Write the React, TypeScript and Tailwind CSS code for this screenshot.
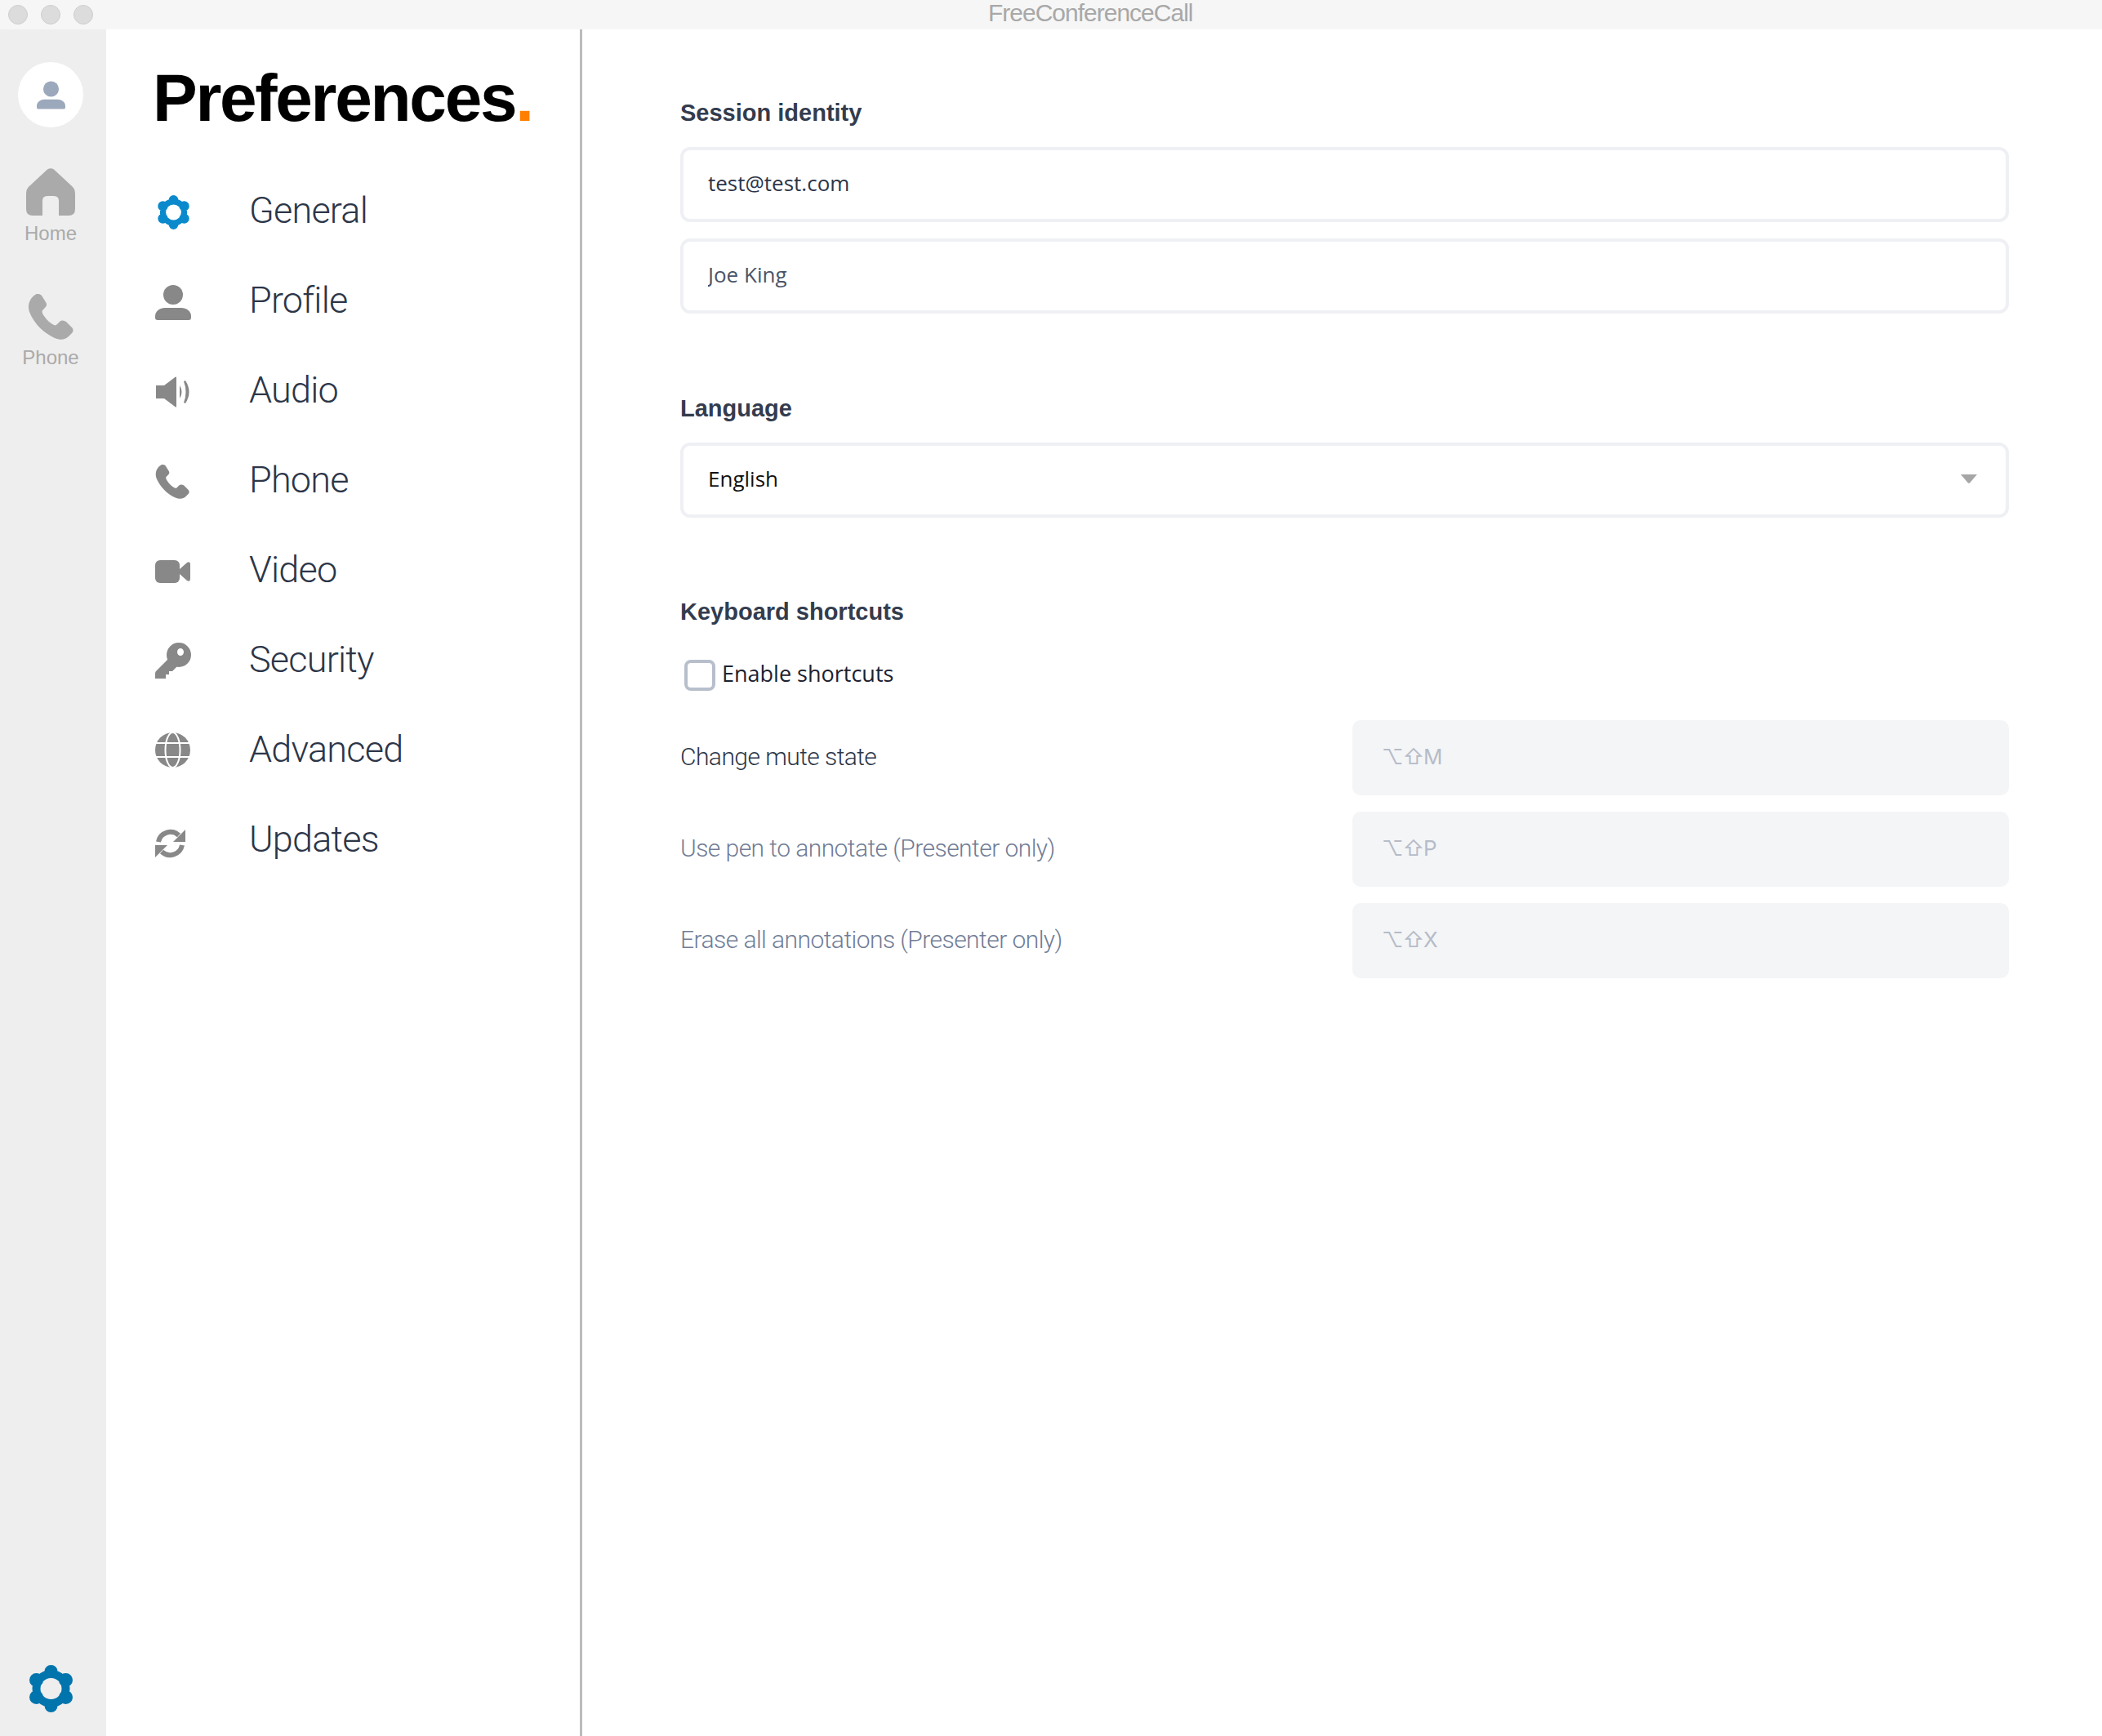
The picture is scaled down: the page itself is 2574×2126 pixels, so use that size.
import React from 'react';

const Gear = ({ className }: { className: string }) => (
  <svg viewBox="0 0 53 58" className={className} fill="currentColor">
    {/* lobes run clockwise, the hole runs the other way so it stays open */}
    <path d="M26.5 0a8 8 0 0 1 0 16a8 8 0 0 1 0-16ZM26.5 42a8 8 0 0 1 0 16a8 8 0 0 1 0-16ZM8.5 10a8.5 8.5 0 0 1 0 17a8.5 8.5 0 0 1 0-17ZM44.5 10a8.5 8.5 0 0 1 0 17a8.5 8.5 0 0 1 0-17ZM8.5 31a8.5 8.5 0 0 1 0 17a8.5 8.5 0 0 1 0-17ZM44.5 31a8.5 8.5 0 0 1 0 17a8.5 8.5 0 0 1 0-17ZM26.5 6a23 23 0 0 1 0 46a23 23 0 0 1 0-46ZM26.5 16a13 13 0 0 0 0 26a13 13 0 0 0 0-26Z" />
  </svg>
);

const Person = ({ className }: { className: string }) => (
  <svg viewBox="0 0 44 43" className={className} fill="currentColor">
    <ellipse cx="22" cy="12" rx="12" ry="12" />
    <path d="M0 38C0 32 6 28 12 28H32C38 28 44 32 44 38V40C44 42 43 43 41 43H3C1 43 0 42 0 40Z" />
  </svg>
);

const Handset = ({ className }: { className: string }) => (
  <svg viewBox="0 0 56 56" className={className} fill="currentColor">
    <path d="M9 1C12-1 15 0 17 2L22 10C24 13 23 15 21 17L18 20C17 22 18 24 20 27C24 33 28 36 32 38C34 39 35 38 36 37L39 34C41 32 44 32 47 34L54 41C56 43 56 46 54 48L50 52C46 56 40 57 33 54C20 48 8 37 2 22C-1 13 3 5 9 1Z" />
  </svg>
);

const Home = ({ className }: { className: string }) => (
  <svg viewBox="0 0 60 58" className={className} fill="currentColor">
    <path d="M26 1.5Q30-1 34 1.5L55 21Q60 25 60 31V50Q60 58 52 58H40V40Q40 34 34 34H26Q20 34 20 40V58H8Q0 58 0 50V31Q0 25 5 21Z" />
  </svg>
);

const Speaker = ({ className }: { className: string }) => (
  <svg viewBox="0 0 42 38" className={className} fill="currentColor">
    <path d="M0 11H10L24 0.5Q25 0 25 1.5V36.5Q25 38 24 37.5L10 27H0Z" />
    <path d="M29 11Q34 19 29 27Z" />
    <path d="M36 5Q45 19 36 33L34 32Q39 19 34 6Z" />
  </svg>
);

const Camera = ({ className }: { className: string }) => (
  <svg viewBox="0 0 43 28" className={className} fill="currentColor">
    <rect x="0" y="0" width="30" height="28" rx="6" />
    <path d="M30 11L39 3Q43 1 43 5V23Q43 27 39 25L30 17Z" />
  </svg>
);

const KeyIcon = ({ className }: { className: string }) => (
  <svg viewBox="0 0 44 44" className={className} fill="currentColor" fillRule="evenodd">
    <path d="M29 0A15 15 0 1 1 29 30A15 15 0 1 1 29 0ZM31 7A4 4.500 0 1 0 31 16A4 4.500 0 1 0 31 7Z" />
    <path d="M17 19L1 35Q0 36 0 38V44H13V39H17V35H21L28 28Z" />
  </svg>
);

const Globe = ({ className }: { className: string }) => (
  <svg viewBox="0 0 43 43" className={className}>
    <circle cx="21.5" cy="21.5" r="21.500" fill="currentColor" />
    <g fill="none" stroke="#fff" strokeWidth="2">
      <path d="M0 13H43M0 30H43" />
      <ellipse cx="21.5" cy="21.5" rx="9" ry="21.500" />
    </g>
  </svg>
);

const Sync = ({ className }: { className: string }) => (
  <svg viewBox="0 0 37 38" className={className} fill="currentColor">
    <path d="M4 17A15 15 0 0 1 29 9" fill="none" stroke="currentColor" strokeWidth="6" />
    <path d="M37 2V17H22Z" />
    <path d="M33 21A15 15 0 0 1 8 29" fill="none" stroke="currentColor" strokeWidth="6" />
    <path d="M0 36V21H15Z" />
  </svg>
);

const navItems = [
  { label: 'General', icon: <Gear className="w-[39px] h-[42px] ml-[3px] text-[#0a8acc]" /> },
  { label: 'Profile', icon: <Person className="w-[44px] h-[43px]" /> },
  { label: 'Audio', icon: <Speaker className="w-[42px] h-[38px] ml-[1px]" /> },
  { label: 'Phone', icon: <Handset className="w-[42px] h-[42px]" /> },
  { label: 'Video', icon: <Camera className="w-[43px] h-[28px]" /> },
  { label: 'Security', icon: <KeyIcon className="w-[44px] h-[44px] mb-[2px]" /> },
  { label: 'Advanced', icon: <Globe className="w-[43px] h-[43px] mb-[3px]" /> },
  { label: 'Updates', icon: <Sync className="w-[37px] h-[38px] mt-[6px]" /> },
];

const shortcuts = [
  { label: 'Change mute state', keys: '⌥⇧M', dim: false },
  { label: 'Use pen to annotate (Presenter only)', keys: '⌥⇧P', dim: true },
  { label: 'Erase all annotations (Presenter only)', keys: '⌥⇧X', dim: true },
];

const SectionLabel = ({ children, className }: { children: React.ReactNode; className: string }) => (
  <div className={`h-[40px] leading-[40px] text-[29px] font-bold text-[#333c4e] font-['Liberation_Sans',sans-serif] ${className}`}>
    {children}
  </div>
);

export default function App() {
  return (
    <div className="w-[2574px] h-[2126px] flex flex-col overflow-hidden bg-white">
      {/* Window chrome */}
      <div className="h-[36px] shrink-0 flex items-center bg-[#f6f6f6] pl-[10px]">
        <div className="flex gap-4">
          <span className="w-[24px] h-[24px] rounded-full bg-[#dcdcdc] border border-[#cfcfcf]" />
          <span className="w-[24px] h-[24px] rounded-full bg-[#dcdcdc] border border-[#cfcfcf]" />
          <span className="w-[24px] h-[24px] rounded-full bg-[#dcdcdc] border border-[#cfcfcf]" />
        </div>
        <span className="ml-[1096px] mb-[5px] text-[30px] leading-[32px] text-[#a8a8a8] font-['Liberation_Sans',sans-serif] tracking-[-1px]">
          FreeConferenceCall
        </span>
      </div>

      <div className="flex-1 flex min-h-0">
        {/* App rail */}
        <div className="w-[130px] shrink-0 bg-[#eeeeee] flex flex-col items-center pr-[6px] pt-[40px] pb-[29px] font-['Liberation_Sans',sans-serif] text-[#aaaaaa]">
          <div className="w-[80px] h-[80px] rounded-full bg-white flex items-center justify-center">
            <Person className="w-[35px] h-[39px] text-[#9ca8bc]" />
          </div>
          <Home className="w-[60px] h-[58px] mt-[50px]" />
          <span className="text-[24px] leading-[28px] mt-[8px]">Home</span>
          <Handset className="w-[56px] h-[56px] mt-[60px]" />
          <span className="text-[24px] leading-[28px] mt-[8px]">Phone</span>
          <Gear className="w-[53px] h-[58px] mt-auto text-[#0074ad]" />
        </div>

        {/* Preferences nav */}
        <div className="w-[583px] shrink-0 border-r-[3px] border-[#bcbcbc] pl-[60px]">
          <h1 className="h-[169px] pt-[36px] -ml-[3px] text-[82px] leading-[96px] font-bold text-black tracking-[-2.3px] font-['Liberation_Sans',sans-serif]">
            Preferences<span className="text-[#ff7f00]">.</span>
          </h1>
          {navItems.map((item) => (
            <div key={item.label} className="h-[110px] flex items-center text-[#888888]">
              <div className="w-[115px] shrink-0 flex items-center">{item.icon}</div>
              <span className="text-[45px] leading-[54px] mb-[4px] font-light tracking-[-0.8px] text-[#2d3648] font-['Roboto',sans-serif]">
                {item.label}
              </span>
            </div>
          ))}
        </div>

        {/* Settings */}
        <div className="flex-1 min-w-0 pl-[120px] pr-[114px] pt-[82px]">
          <SectionLabel className="mb-[22px]">Session identity</SectionLabel>
          <input
            readOnly
            value="test@test.com"
            className="block w-full h-[92px] px-[30px] pb-[4px] border-4 border-[#eff0f4] rounded-[12px] text-[26px] text-[#2d3648] font-['Open_Sans',sans-serif] outline-none"
          />
          <input
            readOnly
            value="Joe King"
            className="block w-full h-[92px] mt-[20px] px-[30px] pb-[4px] border-4 border-[#eff0f4] rounded-[12px] text-[26px] text-[#4a5468] font-['Open_Sans',sans-serif] outline-none"
          />

          <SectionLabel className="mt-[96px] mb-[22px]">Language</SectionLabel>
          <div className="h-[92px] px-[30px] pb-[3px] flex items-center justify-between border-4 border-[#eff0f4] rounded-[12px] text-[26px] text-[#111111] font-['Open_Sans',sans-serif]">
            <span>English</span>
            <svg viewBox="0 0 20 11" className="w-[20px] h-[11px] mr-[5px]">
              <path d="M0 0H20L11 10.500Q10 11 9 10.500Z" fill="#a6a6a6" />
            </svg>
          </div>

          <SectionLabel className="mt-[95px]">Keyboard shortcuts</SectionLabel>
          <div className="mt-[39px] h-[38px] pl-[5px] flex items-center gap-[8px]">
            <span className="w-[38px] h-[38px] rounded-[8px] border-4 border-[#b8bfcc]" />
            <span className="mb-[3px] text-[27px] text-[#1c2230] font-['Open_Sans',sans-serif]">Enable shortcuts</span>
          </div>

          <div className="mt-[36px] flex flex-col gap-[20px]">
            {shortcuts.map((row) => (
              <div key={row.label} className="h-[92px] flex items-center justify-between">
                <span
                  className={`mb-[3px] text-[30px] font-light tracking-[-0.55px] font-['Roboto',sans-serif] ${row.dim ? 'text-[#717d96]' : 'text-[#2d3648]'}`}
                >
                  {row.label}
                </span>
                <div className="w-[804px] h-[92px] pl-[36px] pb-[4px] flex items-center rounded-[10px] bg-[#f4f5f7] text-[26px] tracking-[-1.2px] text-[#b6bcc8] font-['Inter',sans-serif]">
                  {row.keys}
                </div>
              </div>
            ))}
          </div>
        </div>
      </div>
    </div>
  );
}
